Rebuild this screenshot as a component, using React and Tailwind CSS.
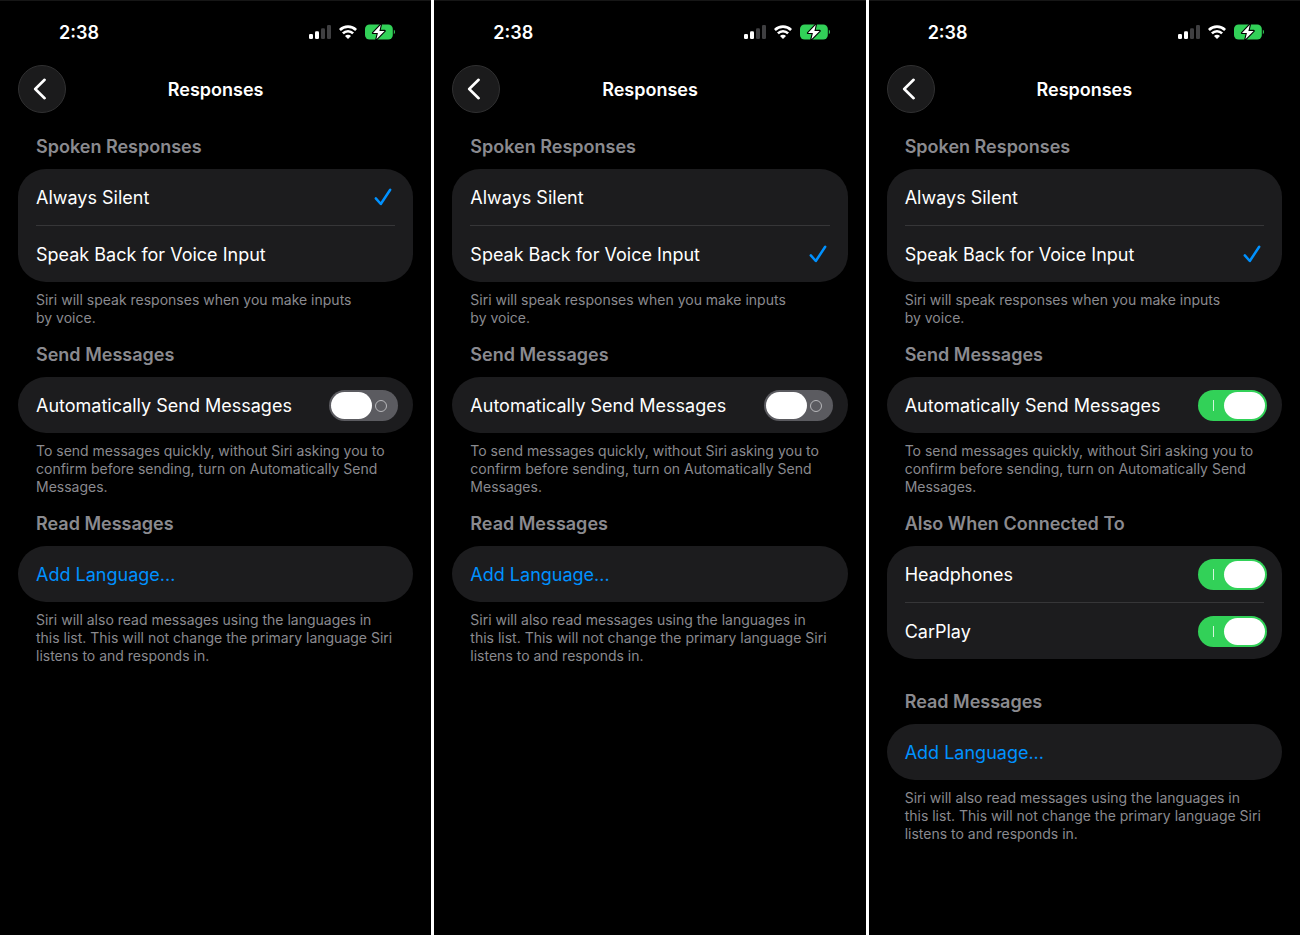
import React, { useId, useState } from "react";

function StatusBar() {
  return (
    <div className="flex h-16 items-center justify-between pr-9 pl-[59px]">
      <span className="text-lg font-semibold">2:38</span>
      <div className="flex items-center gap-2 pb-0.5">
        <svg width="22" height="14" viewBox="0 0 22 14" aria-label="Cellular signal" role="img">
          <rect x="0" y="9" width="4" height="5" rx="1.3" fill="#fff" />
          <rect x="6" y="6.3" width="4" height="7.7" rx="1.3" fill="#fff" />
          <rect x="12" y="3.2" width="4" height="10.8" rx="1.3" fill="#3f3f41" />
          <rect x="18" y="0" width="4" height="14" rx="1.3" fill="#3f3f41" />
        </svg>
        <svg width="18" height="14" viewBox="0 0 18 14" aria-label="Wi-Fi" role="img" fill="none" stroke="#fff" strokeWidth="2.6">
          <path d="M0.9 5a11.5 11.5 0 0 1 16.2 0" />
          <path d="M3.9 8.3a7.2 7.2 0 0 1 10.2 0" />
          <path d="M9 13.9 6 10.9a4.2 4.2 0 0 1 6 0Z" fill="#fff" stroke="none" />
        </svg>
        <svg width="30" height="16" viewBox="0 0 30 16" aria-label="Battery charging" role="img">
          <rect x="0" y="0.5" width="27.8" height="15" rx="4.6" fill="#32d158" />
          <path d="M28.8 5.8c1.5.6 1.5 3.8 0 4.4Z" fill="#32d158" />
          <path d="M15.8 0.8 8 9h4.9L11.4 15.2 19.6 6.9h-5.2Z" fill="#fff" stroke="#000" strokeWidth="2.2" strokeLinejoin="round" paintOrder="stroke" />
        </svg>
      </div>
    </div>
  );
}

function NavBar() {
  return (
    <header className="grid grid-cols-[48px_1fr_48px] items-center px-[18px]">
      <button
        type="button"
        aria-label="Back"
        className="flex size-12 items-center justify-center rounded-full border border-[#303031] bg-[#1b1b1c]"
      >
        <svg width="14" height="22" viewBox="0 0 14 22" fill="none" stroke="#fff" strokeWidth="2.6" strokeLinecap="round" strokeLinejoin="round" className="mr-1">
          <path d="M11.6 1.8 2.2 11 11.6 20.2" />
        </svg>
      </button>
      <h1 className="pt-0.5 text-center text-lg font-semibold">Responses</h1>
    </header>
  );
}

function Section({ title, note, children }) {
  return (
    <section className="pt-4">
      <h2 className="px-[18px] text-lg leading-6 font-semibold text-[#8a8a8f]">{title}</h2>
      <div className="mt-[10px] overflow-hidden rounded-[28px] bg-[#1c1c1e]">{children}</div>
      {note ? (
        <p className="mt-[9px] px-[18px] text-sm leading-[18px] whitespace-pre text-[#8a8a8f]">{note}</p>
      ) : (
        <div className="h-[15px]" />
      )}
    </section>
  );
}

function Separator() {
  return <div className="mx-[18px] h-px bg-[#363638]" />;
}

function Option({ name, label, checked, onSelect }) {
  return (
    <label className="relative flex h-14 items-center justify-between pr-[21px] pl-[18px] text-lg">
      <span className="pt-0.5">{label}</span>
      <input type="radio" name={name} checked={checked} onChange={onSelect} className="sr-only" />
      {checked && (
        <svg width="18" height="18" viewBox="0 0 18 18" fill="none" stroke="#0091ff" strokeWidth="2.5" strokeLinecap="round" strokeLinejoin="round">
          <path d="M1.8 10.4 6.8 16 16.2 1.8" />
        </svg>
      )}
    </label>
  );
}

function Toggle({ label, defaultChecked }) {
  const id = useId();
  const [on, setOn] = useState(defaultChecked);
  return (
    <div className="flex h-14 items-center justify-between pr-[15px] pl-[18px]">
      <label htmlFor={id} className="pt-0.5 text-lg">{label}</label>
      <span className="relative flex h-[31px] w-[69px]">
        <input
          id={id}
          type="checkbox"
          role="switch"
          checked={on}
          onChange={(e) => setOn(e.target.checked)}
          className="h-full w-full appearance-none rounded-full bg-[#5b5b60] checked:bg-[#32d158]"
        />
        <span
          className={
            on
              ? "pointer-events-none absolute inset-y-0.5 right-0.5 w-[41px] rounded-full bg-white"
              : "pointer-events-none absolute inset-y-0.5 left-0.5 w-[41px] rounded-full bg-white"
          }
        />
        {on ? (
          <span className="pointer-events-none absolute top-[10px] left-[15px] h-[11px] w-px bg-[#d3f5dc]" />
        ) : (
          <span className="pointer-events-none absolute top-[10px] right-[11px] size-3 rounded-full border border-[#b8b8bb]" />
        )}
      </span>
    </div>
  );
}

function Phone({ initialResponse, autoSend }) {
  const name = useId();
  const [response, setResponse] = useState(initialResponse);
  return (
    <main className="min-w-0 flex-1 border-t border-[#161616] bg-black text-white">
      <StatusBar />
      <NavBar />
      <div className="px-[18px] pt-[6px]">
        <Section title="Spoken Responses" note={"Siri will speak responses when you make inputs\nby voice."}>
          <Option name={name} label="Always Silent" checked={response === "silent"} onSelect={() => setResponse("silent")} />
          <Separator />
          <Option name={name} label="Speak Back for Voice Input" checked={response === "speak"} onSelect={() => setResponse("speak")} />
        </Section>
        <Section
          title="Send Messages"
          note={"To send messages quickly, without Siri asking you to\nconfirm before sending, turn on Automatically Send\nMessages."}
        >
          <Toggle label="Automatically Send Messages" defaultChecked={autoSend} />
        </Section>
        {autoSend && (
          <Section title="Also When Connected To">
            <Toggle label="Headphones" defaultChecked />
            <Separator />
            <Toggle label="CarPlay" defaultChecked />
          </Section>
        )}
        <Section
          title="Read Messages"
          note={"Siri will also read messages using the languages in\nthis list. This will not change the primary language Siri\nlistens to and responds in."}
        >
          <button type="button" className="flex h-14 w-full items-center px-[18px] pt-0.5 text-lg text-[#0091ff]">
            Add Language...
          </button>
        </Section>
      </div>
    </main>
  );
}

function Divider() {
  return <div className="w-[3px] shrink-0 bg-white" />;
}

export default function App() {
  return (
    <div className="flex min-h-screen font-['Inter',sans-serif]">
      <Phone initialResponse="silent" autoSend={false} />
      <Divider />
      <Phone initialResponse="speak" autoSend={false} />
      <Divider />
      <Phone initialResponse="speak" autoSend />
    </div>
  );
}
